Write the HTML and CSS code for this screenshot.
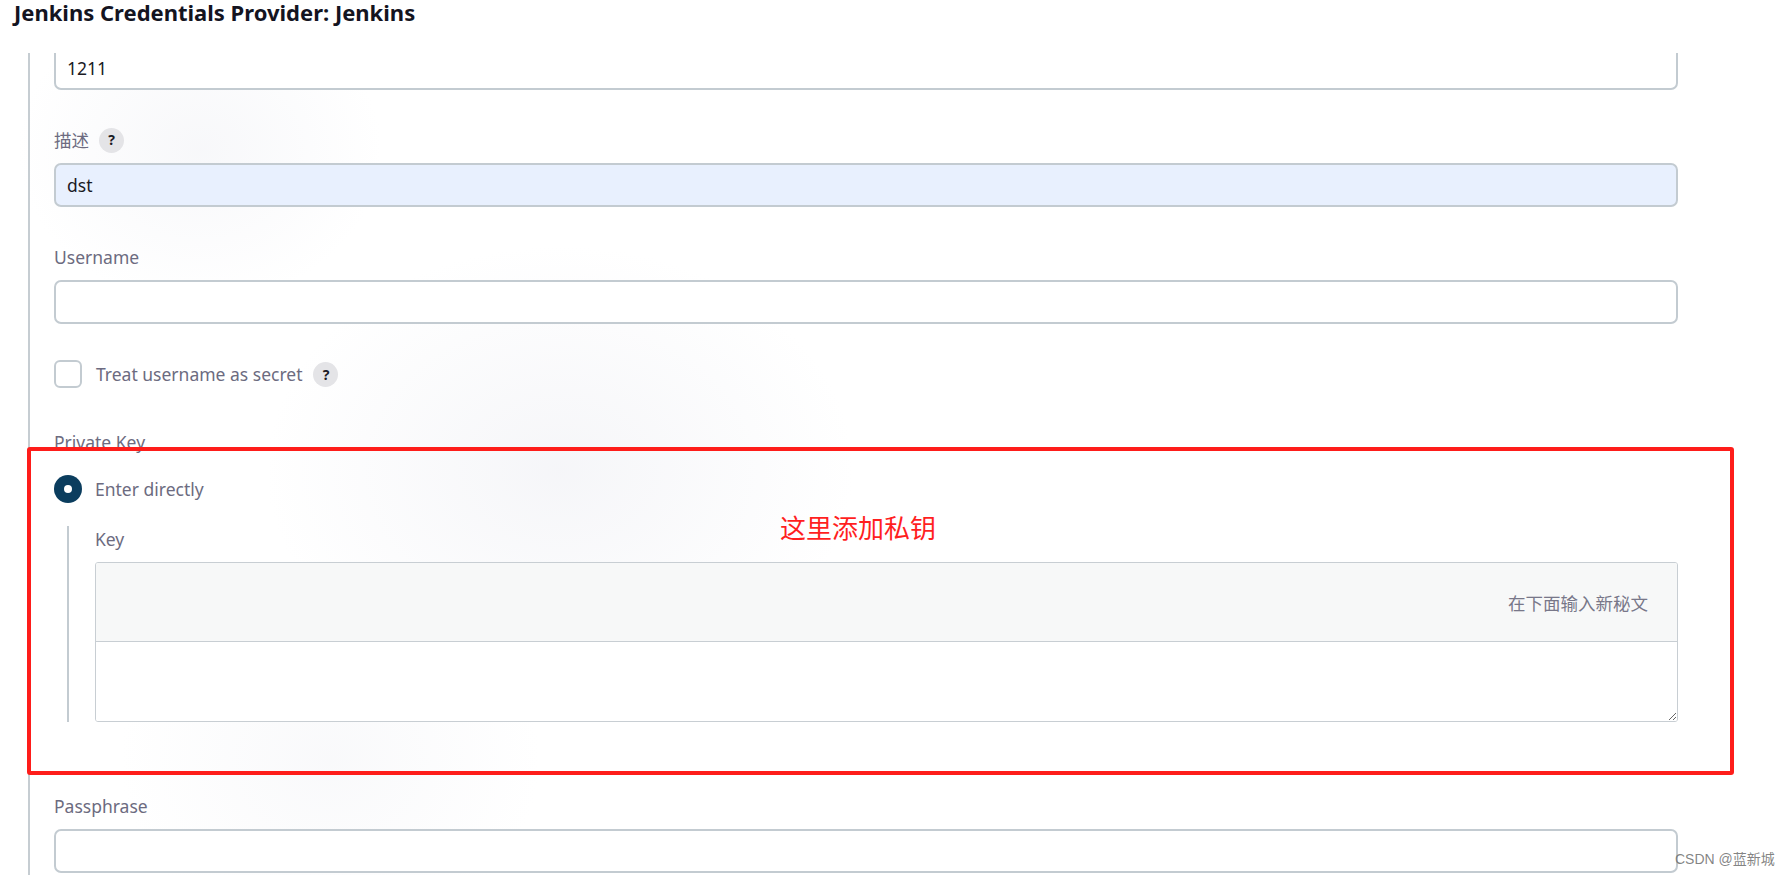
FILE: index.html
```html
<!DOCTYPE html>
<html lang="zh-CN">
<head>
  <meta charset="UTF-8" />
  <meta name="viewport" content="width=device-width, initial-scale=1.0"/>
  <title>Jenkins Credentials Provider: Jenkins</title>
  <link rel="stylesheet" href="styles.css">
</head>
<body>
  <header class="page-header">
    <h1 class="page-title">Jenkins Credentials Provider: Jenkins</h1>
  </header>

  <main class="form-viewport">
    <div class="form-section">
      <div class="field field-cut">
        <input class="input" type="text" value="1211" />
      </div>

      <div class="field">
        <div class="field-label">描述 <span class="help">?</span></div>
        <input class="input input-autofill" type="text" value="dst" />
      </div>

      <div class="field field-user">
        <div class="field-label">Username</div>
        <input class="input" type="text" value="" />
      </div>

      <label class="check-row">
        <span class="checkbox"></span>
        <span class="check-text">Treat username as secret</span>
        <span class="help">?</span>
      </label>

      <div class="field-label label-key">Private Key</div>

      <label class="radio-row">
        <span class="radio"></span>
        <span class="check-text">Enter directly</span>
      </label>

      <div class="nested">
        <div class="field-label">Key</div>
        <div class="secret-box">
          <div class="secret-head">在下面输入新秘文</div>
          <textarea class="secret-input"></textarea>
        </div>
      </div>

      <div class="field">
        <div class="field-label">Passphrase</div>
        <input class="input" type="password" value="" />
      </div>
    </div>
  </main>

  <!-- annotation drawn over the screenshot -->
  <div class="mark-box"></div>
  <div class="mark-text">这里添加私钥</div>
  <div class="watermark">CSDN @蓝新城</div>
</body>
</html>
```

FILE: styles.css
```css
body {
  margin: 0;
  height: 875px;
  overflow: hidden;
  font-family: 'Noto Sans', 'Noto Sans CJK SC', sans-serif;
  font-size: 17.5px;
  color: #1a1a24;
  background:
    radial-gradient(ellipse 420px 320px at 560px 470px, rgba(234, 235, 241, 0.45), transparent 70%),
    radial-gradient(ellipse 260px 220px at 200px 150px, rgba(238, 239, 244, 0.45), transparent 70%),
    radial-gradient(ellipse 300px 260px at 330px 760px, rgba(240, 241, 245, 0.4), transparent 70%),
    #fff;
}

.page-header {
  height: 53px;
  padding-left: 14px;
  background: rgba(255, 255, 255, 0.85);
  position: relative;
  z-index: 2;
}

.page-title {
  margin: 0;
  font-size: 22px;
  line-height: 24px;
  font-weight: 700;
  color: #14141f;
}

.form-viewport {
  height: 822px;
  overflow: hidden;
}

.form-section {
  margin-left: 28px;
  margin-right: 112px;
  border-left: 2px solid #c6cdd2;
  padding-left: 24px;
  min-height: 900px;
}

.field {
  margin-bottom: 38px;
}

.field-cut {
  margin-top: -7px;
}

.field-user {
  margin-bottom: 36px;
}

.field-label {
  display: flex;
  align-items: center;
  height: 24px;
  line-height: 24px;
  margin-bottom: 11px;
  color: #6c6b80;
}

.help {
  display: inline-flex;
  align-items: center;
  justify-content: center;
  width: 25px;
  height: 25px;
  border-radius: 50%;
  background: #e4e4e7;
  color: #1a1a24;
  font-size: 14px;
  font-weight: 700;
  margin-left: 10px;
  flex-shrink: 0;
}

.input {
  display: block;
  box-sizing: border-box;
  width: 100%;
  height: 44px;
  margin: 0;
  padding: 0 11px;
  border: 2px solid #c3cbd1;
  border-radius: 7px;
  background: #fff;
  font-family: inherit;
  font-size: 17.5px;
  color: #1a1a24;
  outline: none;
}

.input-autofill {
  background: #e8f0fe;
}

.check-row,
.radio-row {
  display: flex;
  align-items: center;
  height: 28px;
  color: #6c6b80;
}

.check-row {
  margin-bottom: 42px;
}

.check-row .help {
  margin-left: 11px;
}

.checkbox {
  box-sizing: border-box;
  width: 28px;
  height: 28px;
  border: 2px solid #c3cbd1;
  border-radius: 6px;
  background: #fff;
  margin-right: 14px;
}

.label-key {
  margin-bottom: 21px;
}

.radio-row {
  margin-bottom: 23px;
}

.radio {
  position: relative;
  width: 28px;
  height: 28px;
  border-radius: 50%;
  background: #0b3d5e;
  margin-right: 13px;
}

.radio::after {
  content: "";
  position: absolute;
  left: 10px;
  top: 10px;
  width: 8px;
  height: 8px;
  border-radius: 50%;
  background: #fff;
}

.nested {
  margin-left: 13px;
  border-left: 2px solid #c3cbd1;
  padding-left: 26px;
  padding-top: 1px;
  margin-bottom: 72px;
}

.nested .field-label {
  margin-bottom: 11px;
}

.secret-box {
  box-sizing: border-box;
  height: 160px;
  border: 1px solid #c8ced3;
  border-radius: 3px;
  background: #fff;
  overflow: hidden;
}

.secret-head {
  box-sizing: border-box;
  height: 79px;
  background: #f7f8f8;
  border-bottom: 1px solid #c8ced3;
  display: flex;
  align-items: center;
  justify-content: flex-end;
  padding-right: 29px;
  color: #787789;
  font-size: 17.5px;
}

.secret-input {
  display: block;
  box-sizing: border-box;
  width: 100%;
  height: 79px;
  margin: 0;
  border: none;
  resize: vertical;
  background: #fff;
  outline: none;
}

.mark-box {
  position: absolute;
  left: 27px;
  top: 447px;
  width: 1707px;
  height: 328px;
  box-sizing: border-box;
  border: 4px solid #fe1d1a;
  border-radius: 3px;
  z-index: 3;
}

.mark-text {
  position: absolute;
  left: 780px;
  top: 512px;
  line-height: 30px;
  font-size: 26px;
  font-family: 'Noto Sans CJK SC', sans-serif;
  color: #ff1f1f;
  z-index: 3;
}

.watermark {
  position: absolute;
  left: 1675px;
  top: 849px;
  font-family: 'Liberation Sans', 'Noto Sans CJK SC', sans-serif;
  font-size: 14px;
  line-height: 20px;
  color: rgba(110, 110, 110, 0.85);
  z-index: 3;
}
```
